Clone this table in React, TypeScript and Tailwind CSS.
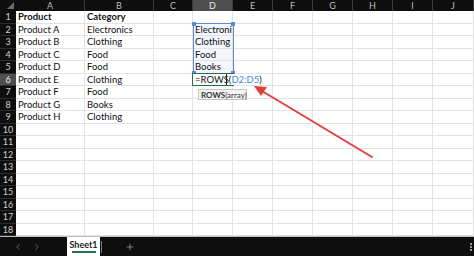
import { ChevronLeft, ChevronRight, Plus } from 'lucide-react';

const COLS = ['A', 'B', 'C', 'D', 'E', 'F', 'G', 'H', 'I', 'J'];

const DATA: Record<number, string[]> = {
  1: ['Product', 'Category'],
  2: ['Product A', 'Electronics', '', 'Electronics'],
  3: ['Product B', 'Clothing', '', 'Clothing'],
  4: ['Product C', 'Food', '', 'Food'],
  5: ['Product D', 'Food', '', 'Books'],
  6: ['Product E', 'Clothing'],
  7: ['Product F', 'Food'],
  8: ['Product G', 'Books'],
  9: ['Product H', 'Clothing'],
};

const ROWS = Array.from({ length: 18 }, (_, i) => i + 1);

function Cell({ row, col }: { row: number; col: number }) {
  const value = DATA[row]?.[col] ?? '';
  const bold = row === 1;
  const isEditing = row === 6 && col === 3;
  const inRange = col === 3 && row >= 2 && row <= 5;

  if (isEditing) {
    return (
      <div className="relative z-20 border-b border-r border-[#e3e3e3] bg-white">
        <div className="absolute -left-px -top-px bottom-[-1px] w-[42px] border-[1.5px] border-[#217346]" />
        <div className="absolute left-[2px] top-0 flex h-full items-center whitespace-nowrap bg-white pr-[1px] text-[9.5px] leading-none text-[#111]">
          <span className="relative">
            =ROWS
            <span className="absolute right-[2px] top-[-1px] h-[11px] w-px bg-[#222]" />
          </span>
          <span>(</span>
          <span className="text-[#4a86e8]">D2:D5</span>
          <span>)</span>
        </div>
      </div>
    );
  }

  return (
    <div
      className={`flex items-center overflow-hidden whitespace-nowrap border-b border-r border-[#e3e3e3] pl-[2px] text-[9.5px] leading-none text-[#111] ${
        bold ? 'font-bold' : ''
      } ${inRange ? 'bg-[#f3f6fc]' : 'bg-white'}`}
    >
      {value}
    </div>
  );
}

function Handle({ className }: { className: string }) {
  return <span className={`absolute h-[4px] w-[4px] bg-[#5b8bd6] ${className}`} />;
}

export default function App() {
  return (
    <div className="flex h-[256px] w-[474px] flex-col overflow-hidden bg-[#0e0e0e] font-['Lato','Open_Sans',sans-serif]">
      {/* Sheet grid */}
      <div className="relative h-[236px] overflow-hidden">
        <div className="grid grid-cols-[16px_69px_69px_39px_repeat(6,40px)_1fr] grid-rows-[11px_repeat(18,12.5px)]">
          {/* corner */}
          <div className="relative bg-[#0e0e0e]">
            <span className="absolute bottom-[2px] right-[2px] h-0 w-0 border-b-[7px] border-l-[7px] border-b-[#6a6a6a] border-l-transparent" />
          </div>
          {COLS.map((c) => (
            <div
              key={c}
              className={`flex items-center justify-center border-r border-[#3a3a3a] text-[9px] leading-none ${
                c === 'D' ? 'bg-[#4f4f4f] text-[#e6e6e6]' : 'bg-[#0e0e0e] text-[#bdbdbd]'
              }`}
            >
              {c}
            </div>
          ))}

          {ROWS.map((r) => (
            <div key={r} className="contents">
              <div
                className={`flex items-center justify-center border-b border-[#2c2c2c] text-[9px] leading-none ${
                  r === 6 ? 'bg-[#4f4f4f] text-[#eeeeee]' : 'bg-[#0e0e0e] text-[#d0d0d0]'
                }`}
              >
                {r}
              </div>
              {COLS.map((_, ci) => (
                <Cell key={ci} row={r} col={ci} />
              ))}
            </div>
          ))}
        </div>

        {/* D2:D5 reference range */}
        <div className="pointer-events-none absolute left-[193px] top-[23px] z-10 h-[51px] w-[41px] border border-[#5b8bd6]">
          <Handle className="-left-[2px] -top-[2px]" />
          <Handle className="-right-[2px] -top-[2px]" />
          <Handle className="-bottom-[2px] -left-[2px]" />
          <Handle className="-bottom-[2px] -right-[2px]" />
        </div>

        {/* function hint */}
        <div className="absolute left-[198px] top-[89px] z-30 flex h-[11px] w-[49px] items-center border border-[#c4c4c4] bg-[#f4f4f4] px-[2px] text-[8px] leading-none text-[#333]">
          <span className="font-bold">ROWS</span>
          <span>(array)</span>
        </div>

        {/* annotation arrow */}
        <svg className="pointer-events-none absolute left-0 top-0 z-40" width="474" height="236">
          <line x1="372" y1="157" x2="262" y2="91" stroke="#e2403d" strokeWidth="2" strokeLinecap="round" />
          <polygon points="254,86 267,87 261,96" fill="#e2403d" />
        </svg>
      </div>

      {/* Sheet tabs */}
      <div className="flex h-[20px] items-center border-t border-[#bdbdbd] bg-[#0e0e0e]">
        <div className="flex w-[67px] items-center gap-[9px] pl-[13px] text-[#9a9a9a]">
          <ChevronLeft size={10} strokeWidth={1.5} />
          <ChevronRight size={10} strokeWidth={1.5} />
        </div>
        <div className="flex h-full w-[33px] flex-col items-center justify-center bg-white">
          <span className="text-[9px] font-bold leading-none text-[#222]">Sheet1</span>
          <span className="mt-[2px] h-[2px] w-[24px] bg-[#217346]" />
        </div>
        <span className="ml-[1px] h-[12px] w-px bg-[#7a7a7a]" />
        <div className="ml-[23px] text-[#b5b5b5]">
          <Plus size={10} strokeWidth={1.5} />
        </div>
        <div className="ml-auto mr-[2px] flex flex-col gap-[1px]">
          <span className="h-[2px] w-[2px] bg-[#9a9a9a]" />
          <span className="h-[2px] w-[2px] bg-[#9a9a9a]" />
          <span className="h-[2px] w-[2px] bg-[#9a9a9a]" />
        </div>
      </div>
    </div>
  );
}
